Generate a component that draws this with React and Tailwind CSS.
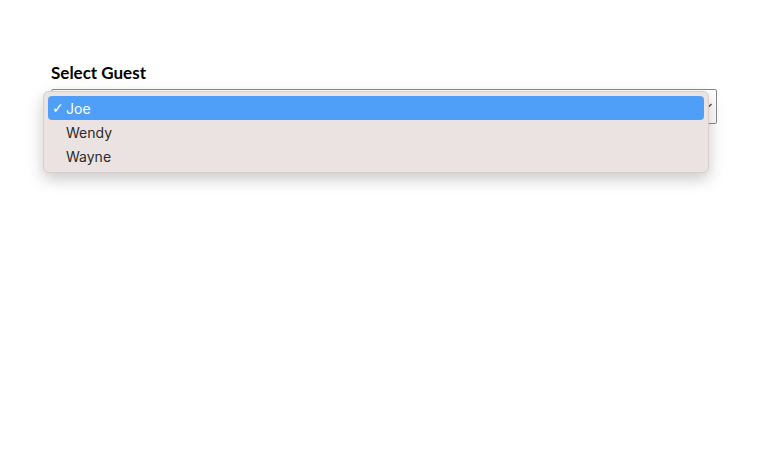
import React from "react";

const guests = ["Joe", "Wendy", "Wayne"];

const App = () => {
  return (
    <div className="min-h-[476px] w-[768px] bg-white px-[51px] pt-[63px]" style={{ fontFamily: "Lato, 'Noto Sans', sans-serif" }}>
      <label className="block text-[17px] font-bold leading-[20px] text-black">Select Guest</label>
      <div className="relative mt-[6px] w-[666px]">
        {/* closed select underneath */}
        <div className="flex h-[35px] items-center justify-end rounded-[2px] border border-[#8a8a8a] bg-white pr-[3px]">
          <svg width="8" height="8" viewBox="0 0 8 8" className="text-[#444]">
            <path d="M1 6.5 L6.5 1" stroke="currentColor" strokeWidth="1.3" fill="none" />
          </svg>
        </div>
        {/* open menu */}
        <div
          className="absolute left-[-8px] top-[2px] w-[666px] rounded-[6px] border border-[#d6cfcd] bg-[#ebe3e1] p-[4px] shadow-[0_6px_16px_rgba(0,0,0,0.22)]"
          style={{ fontFamily: "Inter, 'Noto Sans', sans-serif" }}
        >
          {guests.map((g, i) => (
            <div
              key={g}
              className={
                i === 0
                  ? "flex h-[24px] items-center rounded-[4px] bg-[#4f9ef8] pl-[4px] text-[14px] text-white"
                  : "flex h-[24px] items-center pl-[18px] text-[14px] text-[#2b2b2b]"
              }
            >
              {i === 0 && <span className="mr-[4px] w-[10px] text-[14px] leading-none" style={{ fontFamily: "'DejaVu Sans', sans-serif" }}>✓</span>}
              {g}
            </div>
          ))}
        </div>
      </div>
    </div>
  );
};

export default App;
